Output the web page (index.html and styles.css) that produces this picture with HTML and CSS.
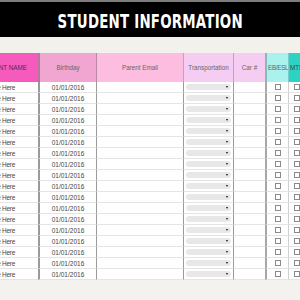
FILE: index.html
```html
<!DOCTYPE html>
<html>
<head>
<meta charset="utf-8">
<link rel="stylesheet" href="styles.css">
</head>
<body>
<div class="page">
  <div class="topline"></div>
  <header class="banner"><h1 class="title">STUDENT INFORMATION</h1></header>
  <div class="gap"></div>
  <div class="sheet" id="sheet">
    <div class="hd c1">STUDENT NAME</div>
    <div class="hd c2">Birthday</div>
    <div class="hd c3">Parent Email</div>
    <div class="hd c4">Transportation</div>
    <div class="hd c5">Car #</div>
    <div class="hd c6">EB/ESL</div>
    <div class="hd c7">MTSS</div>
  </div>
</div>
<script>
  var s = document.getElementById('sheet');
  var html = '';
  for (var i = 0; i < 18; i++) {
    html += '<div class="cell c1 name">Student Name Here</div>' +
      '<div class="cell c2 date">01/01/2016</div>' +
      '<div class="cell c3"></div>' +
      '<div class="cell c4"><span class="dd"><span class="arr"></span></span></div>' +
      '<div class="cell c5"></div>' +
      '<div class="cell c6"><span class="cb"></span></div>' +
      '<div class="cell c7"><span class="cb"></span></div>';
  }
  s.insertAdjacentHTML('beforeend', html);
</script>
</body>
</html>
```

FILE: styles.css
```css
html, body {
  margin: 0;
  padding: 0;
}
body {
  width: 300px;
  height: 300px;
  overflow: hidden;
  background: #f4f2ee;
  font-family: "Liberation Sans", Arial, sans-serif;
}
.page {
  width: 300px;
  height: 300px;
  overflow: hidden;
}
.topline {
  height: 2px;
  background: #7d7d7d;
}
.banner {
  height: 35px;
  background: #000;
  display: flex;
  align-items: center;
  justify-content: center;
  padding-top: 2px;
  box-sizing: border-box;
}
.title {
  margin: 0;
  color: #fff;
  font-family: "DejaVu Sans", "Liberation Sans", sans-serif;
  font-weight: bold;
  font-size: 20px;
  letter-spacing: 0.3px;
  line-height: 1;
  display: inline-block;
  transform: scaleX(0.67);
  white-space: nowrap;
}
.gap {
  height: 16px;
  background: #f3f1ec;
}
.sheet {
  display: grid;
  grid-template-columns: 38px 58px 87px 50px 32px 23px 23px;
  grid-template-rows: 29px repeat(18, 11px);
  width: 311px;
  background: #fff;
}
.hd {
  display: flex;
  align-items: center;
  justify-content: center;
  font-size: 6.3px;
  color: #666;
  white-space: nowrap;
  overflow: hidden;
}
.hd.c1 { background: #f65abd; justify-content: flex-end; padding-right: 11px; color: #5a2a4a; }
.hd.c2 { background: #f0a6d0; border-left: 2px solid #b27a99; }
.hd.c3 { background: #fdbde1; border-left: 1px solid #b98aa5; }
.hd.c4 { background: #f5cdf2; border-left: 1px solid #c4a0c2; }
.hd.c5 { background: #f5cdf2; border-left: 1px solid #c4a0c2; }
.hd.c6 { background: #abf1ee; border-left: 2px solid #8ab8b6; justify-content: flex-start; padding-left: 1px; letter-spacing: -0.3px; }
.hd.c7 { background: #2cd3c5; border-left: 1px solid #7cc; justify-content: flex-start; padding-left: 1px; color: #444; }

.cell {
  border-bottom: 1px solid #e4e4e4;
  display: flex;
  align-items: center;
  justify-content: center;
  font-size: 6.5px;
  color: #444;
  white-space: nowrap;
  overflow: hidden;
  background: #fff;
}
.cell.c1 { justify-content: flex-end; padding-right: 23px; letter-spacing: -0.3px; }
.cell.c2 { border-left: 2px solid #9a9a9a; }
.cell.c3 { border-left: 1px solid #9a9a9a; }
.cell.c4 { border-left: 1px solid #9a9a9a; }
.cell.c5 { border-left: 1px solid #9a9a9a; }
.cell.c6 { border-left: 2px solid #a8a8a8; }
.cell.c7 { border-left: 1px solid #d0d0d0; justify-content: flex-start; padding-left: 5px; }

.dd {
  position: relative;
  width: 45px;
  height: 6px;
  border-radius: 3px;
  background: #e8e8e8;
}
.arr {
  position: absolute;
  right: 3px;
  top: 2px;
  width: 0;
  height: 0;
  border-left: 1.5px solid transparent;
  border-right: 1.5px solid transparent;
  border-top: 2px solid #111;
}
.cb {
  width: 4px;
  height: 4px;
  border: 1px solid #8a8a8a;
  background: #fff;
}
```
